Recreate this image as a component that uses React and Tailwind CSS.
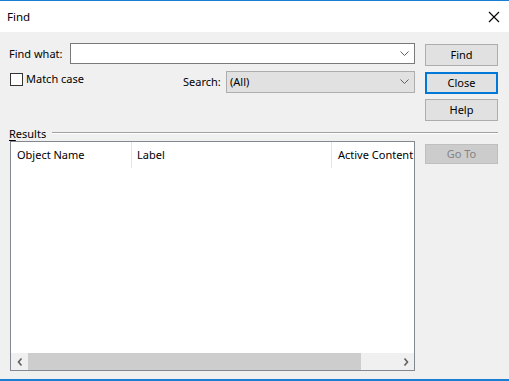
const font = { fontFamily: '"Noto Sans", "Open Sans", sans-serif' };

function Chevron({ className = "" }) {
  return (
    <svg width="9" height="6" viewBox="0 0 9 6" className={className}>
      <path d="M0.5 0.5 L4.5 4.5 L8.5 0.5" fill="none" stroke="#606060" strokeWidth="1" />
    </svg>
  );
}

function Button({ children, className = "" }) {
  return (
    <button
      className={
        "w-[73px] h-[22px] bg-[#e1e1e1] text-[11px] text-black flex items-center justify-center shrink-0 " +
        className
      }
    >
      {children}
    </button>
  );
}

export default function App() {
  return (
    <div className="w-[509px] h-[381px] flex flex-col bg-[#f0f0f0] overflow-hidden select-none" style={font}>
      <div className="h-px bg-[#1a7fd4]" />
      <div className="h-[31px] bg-white flex items-center justify-between pl-[7px] pr-[9px]">
        <span className="text-[11.5px] text-black">Find</span>
        <svg width="12" height="12" viewBox="0 0 12 12">
          <path d="M1 1 L11 11 M11 1 L1 11" stroke="#000" strokeWidth="1.1" />
        </svg>
      </div>

      <div className="flex-1 flex flex-col pl-[9px] pr-[11px] pt-[11px] text-[11px] leading-[14px] text-black whitespace-nowrap">
        {/* Find what */}
        <div className="flex items-start h-[23px]">
          <div className="w-[61px] h-[21px] flex items-center shrink-0">Find what:</div>
          <div className="w-[345px] h-[21px] bg-white border border-[#7a7a7a] flex items-center justify-end pr-[5px] shrink-0">
            <Chevron />
          </div>
          <Button className="ml-[10px] mt-px border border-[#adadad]">Find</Button>
        </div>

        {/* Match case / Search */}
        <div className="flex items-start mt-[5px] h-[23px]">
          <div className="flex items-center h-[16px] ml-px w-[160px] shrink-0">
            <div className="w-[13px] h-[13px] bg-white border border-[#333] shrink-0" />
            <span className="ml-[3px]">Match case</span>
          </div>
          <div className="ml-[13px] h-[21px] flex items-center w-[43px] shrink-0">Search:</div>
          <div className="w-[189px] h-[22px] bg-[#e1e1e1] border border-[#adadad] flex items-center justify-between pl-[3px] pr-[5px] shrink-0">
            <span>(All)</span>
            <Chevron />
          </div>
          <Button className="ml-[10px] mt-px border-2 border-[#0078d7]">Close</Button>
        </div>

        {/* Help */}
        <div className="flex justify-end mt-[5px] h-[22px]">
          <Button className="border border-[#adadad]">Help</Button>
        </div>

        {/* Results */}
        <div className="flex items-center mt-[6px] h-[14px]">
          <span>
            <span className="underline underline-offset-2">R</span>esults
          </span>
          <div className="flex-1 ml-[6px] h-[2px] -mt-[3px] border-t border-[#a0a0a0] border-b border-b-white" />
        </div>

        {/* List + Go To */}
        <div className="flex items-start">
          <div className="ml-px w-[405px] h-[230px] bg-white border border-[#828790] flex flex-col shrink-0">
            <div className="flex h-[26px] items-center">
              <div className="w-[121px] pl-[6px] h-full flex items-center border-r border-[#e5e5e5]">Object Name</div>
              <div className="w-[200px] pl-[5px] h-full flex items-center border-r border-[#e5e5e5]">Label</div>
              <div className="pl-[6px]">Active Content</div>
            </div>
            <div className="flex-1" />
            <div className="h-[17px] flex bg-[#f0f0f0]">
              <div className="w-[17px] flex items-center justify-center">
                <svg width="6" height="8" viewBox="0 0 6 8">
                  <path d="M4.5 0.5 L1.5 4 L4.5 7.5" fill="none" stroke="#606060" strokeWidth="1.6" />
                </svg>
              </div>
              <div className="w-[333px] bg-[#cdcdcd]" />
              <div className="flex-1" />
              <div className="w-[17px] flex items-center justify-center">
                <svg width="6" height="8" viewBox="0 0 6 8">
                  <path d="M1.5 0.5 L4.5 4 L1.5 7.5" fill="none" stroke="#606060" strokeWidth="1.6" />
                </svg>
              </div>
            </div>
          </div>
          <button className="ml-[10px] mt-[3px] w-[73px] h-[20px] bg-[#cccccc] border border-[#bfbfbf] text-[11px] text-[#838383] flex items-center justify-center shrink-0">
            Go To
          </button>
        </div>
      </div>

      <div className="h-[2px] bg-[#1a7fd4]" />
    </div>
  );
}
